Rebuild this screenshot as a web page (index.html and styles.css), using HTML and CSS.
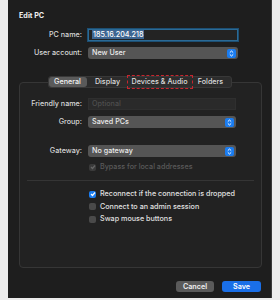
FILE: index.html
```html
<!DOCTYPE html>
<html lang="en">
<head>
    <meta charset="UTF-8" />
    <meta name="viewport" content="width=device-width, initial-scale=1.0" />
    <title>Edit PC</title>
    <link rel="stylesheet" href="styles.css">
</head>
<body>
    <div class="ventana">
        <h1 class="titulo">Edit PC</h1>

        <div class="filas">
            <label class="etiqueta">PC name:</label>
            <div class="campo foco"><span class="seleccion">185.16.204.218</span></div>

            <label class="etiqueta">User account:</label>
            <div class="popup">New User<span class="flechas"><svg width="5" height="7" viewBox="0 0 5 7"><path d="M0.8 2.6 L2.5 1 L4.2 2.6 M0.8 4.4 L2.5 6 L4.2 4.4" fill="none" stroke="#fff" stroke-width="1"/></svg></span></div>
        </div>

        <div class="pestanas">
            <span class="pestana activa">General</span>
            <span class="pestana p-display">Display</span>
            <span class="pestana marcada">Devices &amp; Audio</span>
            <span class="pestana p-folders">Folders</span>
        </div>

        <div class="caja">
            <div class="filas interior">
                <label class="etiqueta">Friendly name:</label>
                <div class="campo vacio">Optional</div>

                <label class="etiqueta">Group:</label>
                <div class="popup">Saved PCs<span class="flechas"><svg width="5" height="7" viewBox="0 0 5 7"><path d="M0.8 2.6 L2.5 1 L4.2 2.6 M0.8 4.4 L2.5 6 L4.2 4.4" fill="none" stroke="#fff" stroke-width="1"/></svg></span></div>

                <label class="etiqueta espacio">Gateway:</label>
                <div class="popup espacio">No gateway<span class="flechas"><svg width="5" height="7" viewBox="0 0 5 7"><path d="M0.8 2.6 L2.5 1 L4.2 2.6 M0.8 4.4 L2.5 6 L4.2 4.4" fill="none" stroke="#fff" stroke-width="1"/></svg></span></div>

                <span></span>
                <div class="opcion apagada"><span class="casilla gris"><svg width="6" height="6" viewBox="0 0 6 6"><path d="M1 3 L2.5 4.5 L5 1.5" fill="none" stroke="#666" stroke-width="1.2"/></svg></span>Bypass for local addresses</div>
            </div>

            <div class="separador"></div>

            <div class="opciones">
                <div class="opcion"><span class="casilla azul"><svg width="6" height="6" viewBox="0 0 6 6"><path d="M1 3 L2.5 4.5 L5 1.5" fill="none" stroke="#fff" stroke-width="1.2"/></svg></span>Reconnect if the connection is dropped</div>
                <div class="opcion"><span class="casilla"></span>Connect to an admin session</div>
                <div class="opcion"><span class="casilla"></span>Swap mouse buttons</div>
            </div>
        </div>

        <div class="botones">
            <button type="button" class="boton">Cancel</button>
            <button type="button" class="boton guardar">Save</button>
        </div>
    </div>
</body>
</html>
```

FILE: styles.css
```css
body {
    margin: 0;
    padding: 0;
    background-color: #ececec;
    font-family: "Inter", "Liberation Sans", Arial, sans-serif;
    font-size: 7.2px;
    font-weight: 500;
    color: #e2e2e2;
}
.ventana {
    margin-left: 8px;
    width: 264px;
    height: 298px;
    box-sizing: border-box;
    padding-top: 11px;
    background-color: #1e1e1e;
    border-right: 1px solid #3a3a3a;
}
.titulo {
    margin: 0;
    padding-left: 11px;
    font-size: 7.2px;
    font-weight: bold;
    line-height: 10px;
    color: #f0f0f0;
}
.filas {
    display: grid;
    grid-template-columns: 74px 150px;
    column-gap: 6px;
    row-gap: 6px;
    margin-top: 8px;
}
.etiqueta {
    text-align: right;
    line-height: 12px;
    color: #d8d8d8;
    white-space: nowrap;
}
.campo {
    height: 12px;
    box-sizing: border-box;
    background-color: #282828;
    border: 1px solid #3c3c3c;
    line-height: 10px;
    padding-left: 3px;
}
.foco {
    border: 1px solid #2a6a96;
    box-shadow: 0 0 0 1px #1d4f73;
    background-color: #232323;
}
.seleccion {
    background-color: #3d6591;
    color: #ffffff;
    padding: 0 1px;
}
.vacio {
    color: #4e4e4e;
    background-color: #2a2a2a;
    border-color: #2f2f2f;
}
.popup {
    height: 12px;
    box-sizing: border-box;
    background-color: #555555;
    border-radius: 3px;
    line-height: 12px;
    padding-left: 4px;
    display: flex;
    justify-content: space-between;
    align-items: center;
    color: #ececec;
}
.flechas {
    width: 9px;
    height: 9px;
    margin-right: 2px;
    border-radius: 2px;
    background-color: #1a7cf0;
    display: flex;
    align-items: center;
    justify-content: center;
}
.pestanas {
    display: flex;
    width: 184px;
    height: 12px;
    margin: 17px auto 0;
    background-color: #2c2c2c;
    border: 1px solid #383838;
    border-radius: 3px;
    box-sizing: border-box;
    position: relative;
    z-index: 2;
}
.pestana {
    flex: none;
    line-height: 10px;
    text-align: center;
    white-space: nowrap;
    color: #dcdcdc;
}
.activa {
    width: 38px;
    background-color: #5a5a5a;
    border-radius: 3px;
    color: #f4f4f4;
}
.p-display {
    width: 42px;
}
.marcada {
    width: 62px;
    outline: 1px dashed #c8252e;
    outline-offset: 1px;
}
.p-folders {
    width: 40px;
}
.caja {
    margin: -6px 0 0 11px;
    width: 243px;
    height: 186px;
    box-sizing: border-box;
    border: 1px solid #363636;
    border-radius: 4px;
    background-color: #222222;
}
.interior {
    grid-template-columns: 62px 148px;
    margin-top: 15px;
}
.espacio {
    margin-top: 11px;
}
.opcion {
    display: flex;
    align-items: center;
    line-height: 10px;
    white-space: nowrap;
    color: #e0e0e0;
}
.apagada {
    color: #5a5a5a;
    margin-top: -1px;
}
.casilla {
    width: 7px;
    height: 7px;
    border-radius: 2px;
    background-color: #4a4a4a;
    margin: 0 4px 0 1px;
    display: flex;
    align-items: center;
    justify-content: center;
}
.gris {
    background-color: #3a3a3a;
}
.azul {
    background-color: #1a7cf0;
}
.separador {
    height: 1px;
    margin: 8px 7px 0;
    background-color: #353535;
}
.opciones {
    display: flex;
    flex-direction: column;
    gap: 2.5px;
    padding-left: 68px;
    margin-top: 8px;
}
.botones {
    display: flex;
    justify-content: flex-end;
    gap: 8px;
    margin-top: 13px;
    padding-right: 10px;
}
.boton {
    width: 38px;
    height: 11px;
    padding: 0;
    border: none;
    border-radius: 3px;
    background-color: #5a5a5a;
    color: #f0f0f0;
    font-family: "Inter", "Liberation Sans", Arial, sans-serif;
    font-size: 7.2px;
    font-weight: 600;
}
.guardar {
    width: 39px;
    background-color: #1a6fe8;
    color: #ffffff;
}
```
